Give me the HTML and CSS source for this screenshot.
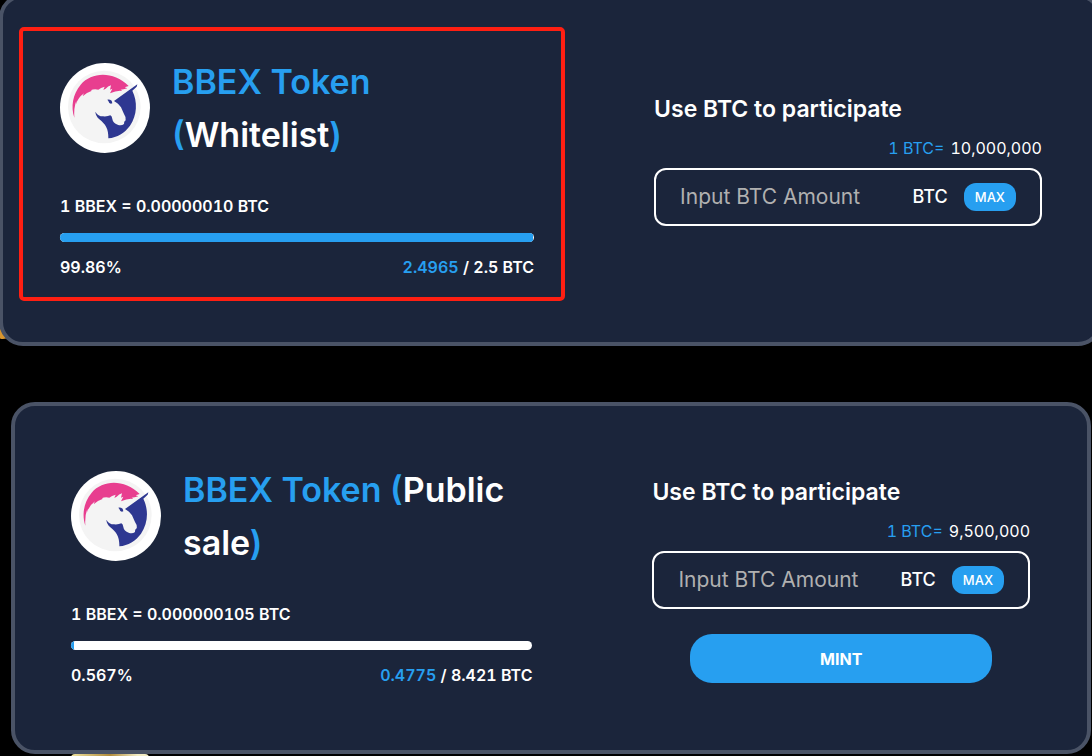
FILE: index.html
```html
<!DOCTYPE html>
<html lang="en">
<head>
<meta charset="utf-8">
<title>BBEX Token sale</title>
<link rel="stylesheet" href="styles.css">
</head>
<body>
<svg class="defs" aria-hidden="true">
  <symbol id="unicorn" viewBox="30 24 270 270">
    <circle cx="165" cy="159" r="135" fill="#fff"/>
    <circle cx="163" cy="156" r="109" fill="#f4f4f4"/>
    <path fill="#e83e8f" d="M73 188C62 155 68 118 92 89C126 50 190 48 236 93L224 97L232 100Q220 104 212 104L217 108Q202 105 180 115L187 101L180 104L183 91Q174 93 167 101L160 105L164 95Q152 98 145 104Q132 101 122 106L126 107Q110 112 98 124Q100 118 102 115Q84 128 78 148L79 137Q71 158 73 188Z"/>
    <path fill="#2e3791" d="M262 88L260 95L247 107C263 140 262 180 240 212C224 234 202 247 175 250C176 222 166 207 148 193Q137 183 136 170Q144 184 159 184Q173 185 181 181Q186 183 187 192Q189 205 203 209Q214 213 222 207Q221 200 227 196Q229 187 222 177L213 157L204 146L192 138Z"/>
    <path fill="#2e3791" d="M172 134Q179 133 185 137L187 145Q178 149 175 138Z"/>
  </symbol>
</svg>
<main class="page">
  <section class="card card--whitelist">
    <div class="sale">
      <header class="sale__head">
        <svg class="logo" role="img" aria-label="BBEX"><use href="#unicorn"/></svg>
        <h2 class="sale__title">BBEX Token (<span class="light">Whitelist</span>)</h2>
      </header>
      <p class="sale__price">1 BBEX = 0.00000010 BTC</p>
      <div class="bar"><div class="bar__fill" style="width:99.86%"></div></div>
      <div class="sale__stats"><span>99.86%</span><span><span class="accent">2.4965</span> / 2.5 BTC</span></div>
      <div class="highlight"></div>
    </div>
    <form class="buy buy--closed">
      <label class="buy__title" for="amount-whitelist">Use BTC to participate</label>
      <p class="buy__rate"><span class="accent">1 BTC=</span><span>10,000,000</span></p>
      <div class="field">
        <input class="field__input" id="amount-whitelist" type="text" placeholder="Input BTC Amount">
        <span class="field__unit">BTC</span>
        <button class="field__max" type="button">MAX</button>
      </div>
    </form>
  </section>
  <section class="card card--public">
    <div class="sale">
      <header class="sale__head">
        <svg class="logo" role="img" aria-label="BBEX"><use href="#unicorn"/></svg>
        <h2 class="sale__title">BBEX Token (<span class="light">Public sale</span>)</h2>
      </header>
      <p class="sale__price">1 BBEX = 0.000000105 BTC</p>
      <div class="bar"><div class="bar__fill" style="width:0.567%"></div></div>
      <div class="sale__stats"><span>0.567%</span><span><span class="accent">0.4775</span> / 8.421 BTC</span></div>
    </div>
    <form class="buy">
      <label class="buy__title" for="amount-public">Use BTC to participate</label>
      <p class="buy__rate"><span class="accent">1 BTC=</span><span>9,500,000</span></p>
      <div class="field">
        <input class="field__input" id="amount-public" type="text" placeholder="Input BTC Amount">
        <span class="field__unit">BTC</span>
        <button class="field__max" type="button">MAX</button>
      </div>
      <button class="mint" type="button">MINT</button>
    </form>
  </section>
  <div class="coin"></div>
</main>
</body>
</html>
```
FILE: styles.css
```css
* { box-sizing: border-box; }
body {
  margin: 0;
  background: #000;
  color: #fff;
  font-family: Inter, "Liberation Sans", sans-serif;
  font-size: 16px;
  line-height: 24px;
  overflow: hidden;
}
h2, p { margin: 0; }
button, input { font: inherit; color: inherit; border: 0; }
.defs { position: absolute; width: 0; height: 0; }
.page { display: flex; flex-direction: column; }

.card {
  position: relative;
  display: grid;
  grid-template-columns: minmax(0, 11fr) minmax(0, 9fr);
  column-gap: 120px;
  padding: 57px 57px 63px 56px;
  border: 4px solid #4a5366;
  border-radius: 24px;
  background: #1b253b;
}
.card--whitelist {
  margin: -6px -10px 0 -1px;
  padding-left: 57px;
  padding-right: 56px;
}
.card--public { margin: 56px 1px 0 11px; }
.card--whitelist::before {
  content: "";
  position: absolute;
  z-index: -1;
  left: -8px;
  bottom: 3px;
  width: 16px;
  height: 16px;
  border-radius: 0 0 8px 8px;
  background: #d9962e;
}

.sale { position: relative; font-weight: 600; }
.sale__head { display: flex; align-items: center; gap: 22px; }
.logo { flex: none; width: 90px; height: 90px; }
.sale__title {
  flex: 1;
  font-size: 34px;
  line-height: 53px;
  font-weight: 600;
  color: #279ff0;
}
.light { color: #fff; }
.accent { color: #279ff0; }
.sale__price { margin-top: 33px; }
.sale__price, .sale__stats, .buy__rate { font-variant-numeric: tabular-nums; }
.bar {
  height: 9px;
  margin-top: 15px;
  border-radius: 5px;
  background: #fff;
  overflow: hidden;
}
.bar__fill { height: 100%; background: #279ff0; }
.sale__stats { display: flex; justify-content: space-between; margin-top: 13px; }
.highlight {
  position: absolute;
  inset: -28px -31px -22px -41px;
  border: 4px solid #ff1f12;
  border-radius: 5px;
  pointer-events: none;
}

.buy { display: flex; flex-direction: column; padding-top: 11px; }
.buy--closed { padding-top: 36px; }
.buy__title { font-size: 23px; line-height: 36px; font-weight: 600; }
.buy__rate { display: flex; justify-content: flex-end; gap: 6px; margin-top: 9px; }
.field {
  display: flex;
  align-items: center;
  gap: 16px;
  height: 58px;
  margin-top: 8px;
  padding: 0 24px;
  border: 2px solid #fff;
  border-radius: 12px;
}
.field__input {
  flex: 1;
  width: 100%;
  min-width: 0;
  padding: 0;
  background: none;
  font-size: 21px;
  outline: 0;
}
.field__input::placeholder { color: #b0b0b0; opacity: 1; }
.field__unit { font-size: 18px; font-weight: 500; }
.field__max {
  height: 28px;
  padding: 0 11px;
  border-radius: 12px;
  background: #279ff0;
  font-size: 13px;
  font-weight: 500;
}
.mint {
  align-self: center;
  width: 80%;
  height: 49px;
  margin-top: 25px;
  border-radius: 22px;
  background: #279ff0;
  font-weight: 700;
}
.coin {
  width: 78px;
  height: 8px;
  margin-left: 71px;
  border-radius: 4px 4px 0 0;
  background: linear-gradient(90deg, #f0e3a0, #b08a3a 50%, #f3ecc4 85%);
}
```
